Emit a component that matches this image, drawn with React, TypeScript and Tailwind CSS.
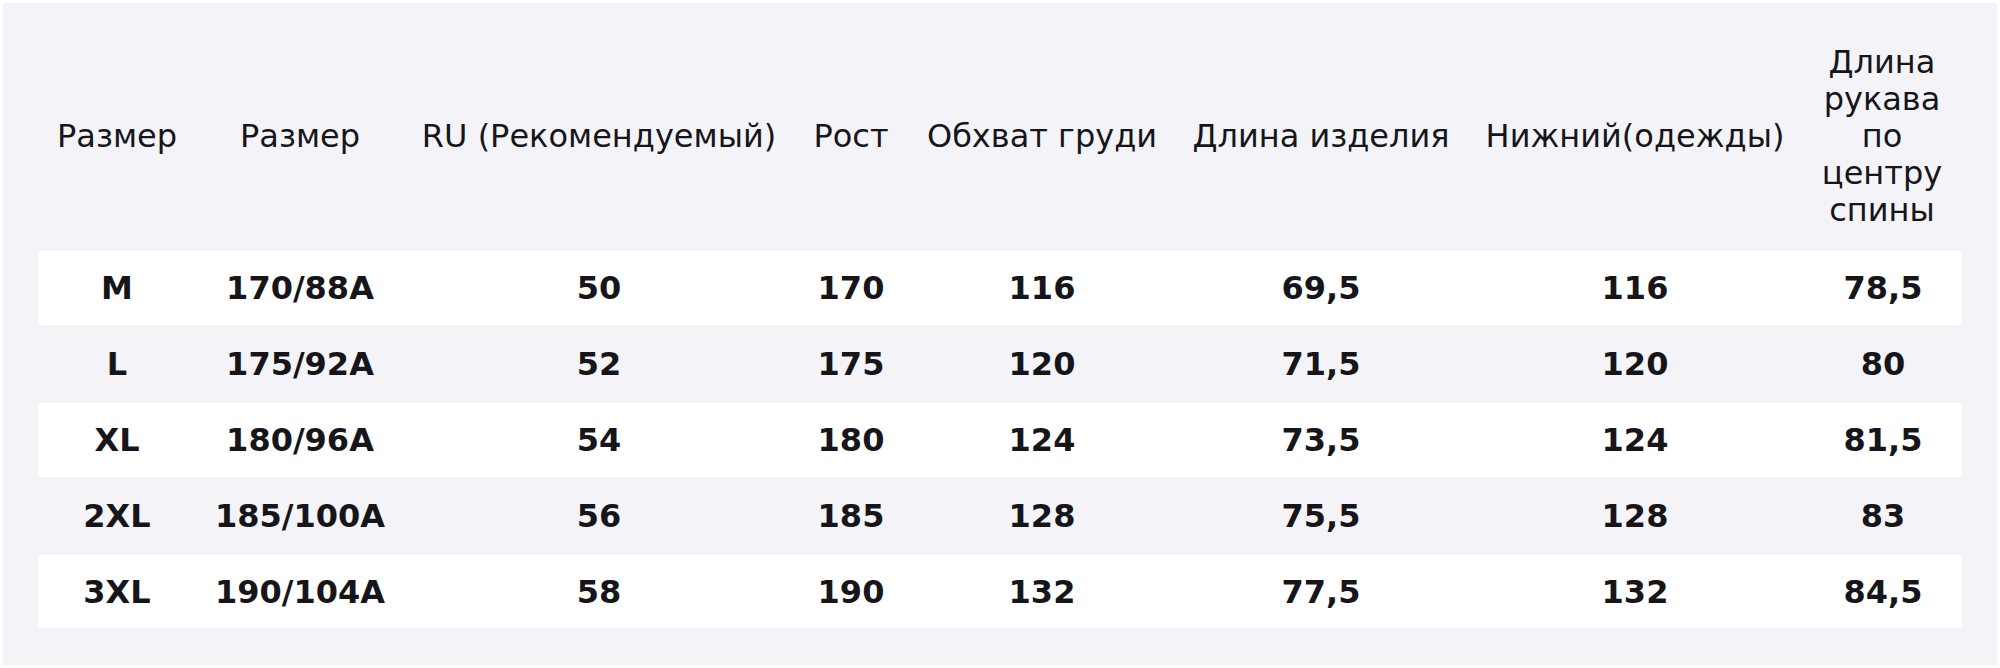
const headers = [
  "Размер",
  "Размер",
  "RU (Рекомендуемый)",
  "Рост",
  "Обхват груди",
  "Длина изделия",
  "Нижний(одежды)",
  "Длина рукава по центру спины",
];

const rows = [
  ["M", "170/88A", "50", "170", "116", "69,5", "116", "78,5"],
  ["L", "175/92A", "52", "175", "120", "71,5", "120", "80"],
  ["XL", "180/96A", "54", "180", "124", "73,5", "124", "81,5"],
  ["2XL", "185/100A", "56", "185", "128", "75,5", "128", "83"],
  ["3XL", "190/104A", "58", "190", "132", "77,5", "132", "84,5"],
];

// ширины колонок подобраны по скриншоту
const widths = ["w-[158px]", "w-[208px]", "w-[390px]", "w-[114px]", "w-[268px]", "w-[290px]", "w-[338px]", "w-[158px]"];
const rowHeights = ["h-[74px]", "h-[78px]", "h-[74px]", "h-[78px]", "h-[73px]"];

export default function App() {
  return (
    <div className="w-[2000px] h-[668px] bg-white p-[3px] font-['DejaVu_Sans',sans-serif]">
      <div className="h-[662px] bg-[#f4f4f8] px-[35px] pt-[35px]">
        <table className="w-[1924px] table-fixed border-collapse text-[32px] text-[#16161a]">
          <colgroup>
            {widths.map((w, i) => (
              <col key={i} className={w} />
            ))}
          </colgroup>
          <thead>
            <tr className="h-[213px]">
              {headers.map((h, i) => (
                <th
                  key={i}
                  className={`pb-[17px] align-middle text-center font-normal leading-[37px] ${
                    i === headers.length - 1 ? "pl-[14px] pr-[16px]" : "px-0 whitespace-nowrap"
                  }`}
                >
                  {h}
                </th>
              ))}
            </tr>
          </thead>
          <tbody>
            {rows.map((r, ri) => (
              <tr key={ri} className={`${rowHeights[ri]} ${ri % 2 === 0 ? "bg-white" : ""}`}>
                {r.map((c, ci) => (
                  <td key={ci} className="p-0 text-center align-middle font-bold">
                    {c}
                  </td>
                ))}
              </tr>
            ))}
          </tbody>
        </table>
      </div>
    </div>
  );
}
